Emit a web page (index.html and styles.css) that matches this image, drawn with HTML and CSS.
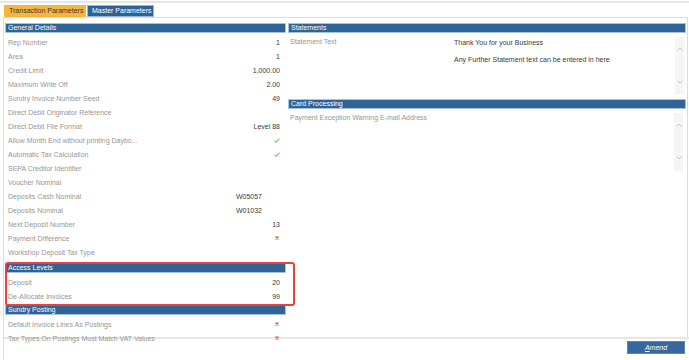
FILE: index.html
```html
<!DOCTYPE html>
<html>
<head>
<meta charset="utf-8">
<link rel="stylesheet" href="styles.css">
</head>
<body>
<div class="page">
  <div class="topline"></div>
  <div class="tabs">
    <div class="tab tab-active">Transaction Parameters</div>
    <div class="tab tab-master">Master Parameters</div>
  </div>
  <div class="panel">
    <div class="col-left">
      <div class="hdr">General Details</div>
      <div class="rows">
        <div class="row"><span class="lbl">Rep Number</span><span class="val">1</span></div>
        <div class="row"><span class="lbl">Area</span><span class="val">1</span></div>
        <div class="row"><span class="lbl">Credit Limit</span><span class="val">1,000.00</span></div>
        <div class="row"><span class="lbl">Maximum Write Off</span><span class="val">2.00</span></div>
        <div class="row"><span class="lbl">Sundry Invoice Number Seed</span><span class="val">49</span></div>
        <div class="row"><span class="lbl">Direct Debit Originator Reference</span><span class="val"></span></div>
        <div class="row"><span class="lbl">Direct Debit File Format</span><span class="val">Level 88</span></div>
        <div class="row"><span class="lbl">Allow Month End without printing Daybo...</span><span class="val"><svg class="tick" width="6" height="5" viewBox="0 0 6 5"><polyline points="0.5,2.8 2,4.2 5.5,0.6" fill="none" stroke="#62d26a" stroke-width="1.1"/></svg></span></div>
        <div class="row"><span class="lbl">Automatic Tax Calculation</span><span class="val"><svg class="tick" width="6" height="5" viewBox="0 0 6 5"><polyline points="0.5,2.8 2,4.2 5.5,0.6" fill="none" stroke="#62d26a" stroke-width="1.1"/></svg></span></div>
        <div class="row"><span class="lbl">SEPA Creditor Identifier</span><span class="val"></span></div>
        <div class="row"><span class="lbl">Voucher Nominal</span><span class="val"></span></div>
        <div class="row"><span class="lbl">Deposits Cash Nominal</span><span class="val val-code">W05057</span></div>
        <div class="row"><span class="lbl">Deposits Nominal</span><span class="val val-code">W01032</span></div>
        <div class="row"><span class="lbl">Next Deposit Number</span><span class="val">13</span></div>
        <div class="row"><span class="lbl">Payment Difference</span><span class="val"><svg class="cross" width="4" height="4" viewBox="0 0 4 4"><path d="M0.5 0.5L3.5 3.5M3.5 0.5L0.5 3.5" stroke="#e2552f" stroke-width="1.2"/></svg></span></div>
        <div class="row"><span class="lbl">Workshop Deposit Tax Type</span><span class="val"></span></div>
      </div>
      <div class="hdr hdr-gap">Access Levels</div>
      <div class="rows">
        <div class="row"><span class="lbl">Deposit</span><span class="val">20</span></div>
        <div class="row"><span class="lbl">De-Allocate Invoices</span><span class="val">99</span></div>
      </div>
      <div class="hdr hdr-gap-s">Sundry Posting</div>
      <div class="rows">
        <div class="row"><span class="lbl">Default Invoice Lines As Postings</span><span class="val"><svg class="cross" width="4" height="4" viewBox="0 0 4 4"><path d="M0.5 0.5L3.5 3.5M3.5 0.5L0.5 3.5" stroke="#e2552f" stroke-width="1.2"/></svg></span></div>
        <div class="row"><span class="lbl">Tax Types On Postings Must Match VAT Values</span><span class="val"><svg class="cross" width="4" height="4" viewBox="0 0 4 4"><path d="M0.5 0.5L3.5 3.5M3.5 0.5L0.5 3.5" stroke="#e2552f" stroke-width="1.2"/></svg></span></div>
      </div>
    </div>
    <div class="col-right">
      <div class="hdr">Statements</div>
      <div class="block block-statement">
        <div class="rlbl">Statement Text</div>
        <div class="textarea">
          <p class="tline">Thank You for your Business</p>
          <p class="tline">Any Further Statement text can be entered in here</p>
        </div>
        <div class="scroll scroll-a">
          <svg width="6" height="4" viewBox="0 0 6 4"><polyline points="0.5,3.5 3,1 5.5,3.5" fill="none" stroke="#c4c4c4" stroke-width="1"/></svg>
          <svg width="6" height="4" viewBox="0 0 6 4"><polyline points="0.5,0.5 3,3 5.5,0.5" fill="none" stroke="#c4c4c4" stroke-width="1"/></svg>
        </div>
      </div>
      <div class="hdr hdr-card">Card Processing</div>
      <div class="block block-card">
        <div class="rlbl rlbl-wide">Payment Exception Warning E-mail Address</div>
        <div class="scroll scroll-b">
          <svg width="6" height="4" viewBox="0 0 6 4"><polyline points="0.5,3.5 3,1 5.5,3.5" fill="none" stroke="#c4c4c4" stroke-width="1"/></svg>
          <svg width="6" height="4" viewBox="0 0 6 4"><polyline points="0.5,0.5 3,3 5.5,0.5" fill="none" stroke="#c4c4c4" stroke-width="1"/></svg>
        </div>
      </div>
    </div>
  </div>
  <div class="footer">
    <button class="btn"><u>A</u>mend</button>
  </div>
  <div class="highlight"></div>
</div>
</body>
</html>
```

FILE: styles.css
```css
* { box-sizing: border-box; }
html, body { margin: 0; padding: 0; background: #ffffff; }
body {
  font-family: "Liberation Sans", Arial, sans-serif;
  font-size: 7px;
  color: #3a3a3a;
}
.page {
  position: relative;
  width: 689px;
  height: 360px;
  overflow: hidden;
}
.topline {
  margin-top: 1px;
  height: 2px;
  background: #e6e6e6;
}
.tabs {
  display: flex;
  margin-top: 2px;
  padding-left: 4px;
  height: 12px;
}
.tab {
  height: 12px;
  line-height: 12px;
  padding: 0 5px;
  white-space: nowrap;
}
.tab-active {
  width: 82px;
  background: #f6b63d;
  color: #3a3630;
}
.tab-master {
  width: 67px;
  margin-left: 1px;
  padding-left: 4px;
  background: #2f6199;
  color: #ffffff;
  border: 1px solid #9bb6d6;
  line-height: 10px;
}
.panel {
  display: flex;
  margin-left: 3px;
  width: 685px;
  height: 320px;
  border-top: 1px solid #dcdcdc;
  border-left: 1px solid #dcdcdc;
  border-right: 1px solid #dcdcdc;
  padding: 5px 1px 0 1px;
  gap: 2px;
}
.col-left {
  width: 281px;
  flex: none;
}
.col-right {
  width: 398px;
  flex: none;
}
.hdr {
  height: 10px;
  line-height: 8px;
  background: #2f6496;
  border: 1px solid #a9c1dc;
  color: #ffffff;
  padding-left: 2px;
  white-space: nowrap;
}
.hdr-gap { margin-top: 4px; }
.hdr-gap-s { margin-top: 2px; }
.rows { padding-top: 2px; }
.row {
  display: flex;
  justify-content: space-between;
  align-items: center;
  height: 14px;
  padding: 0 6px 0 3px;
  white-space: nowrap;
}
.lbl { color: #969696; }
.val { color: #3a3a3a; display: flex; align-items: center; }
.val-code { margin-right: 18px; }
.tick { display: block; }
.cross { display: block; margin-right: 1px; }

.block {
  display: flex;
  margin-top: 2px;
}
.block-statement { height: 62px; }
.block-card { height: 62px; }
.rlbl {
  width: 166px;
  flex: none;
  height: 14px;
  line-height: 14px;
  padding-left: 2px;
  color: #969696;
  white-space: nowrap;
}
.rlbl-wide { width: 386px; }
.textarea {
  flex: 1;
  padding-top: 1px;
}
.tline {
  margin: 0 0 3px 0;
  height: 14px;
  line-height: 14px;
  color: #3a3a3a;
  white-space: nowrap;
}
.hdr-card { margin-top: 2px; }
.scroll {
  width: 9px;
  flex: none;
  background: #f5f5f5;
  display: flex;
  flex-direction: column;
  justify-content: space-between;
  align-items: center;
}
.scroll-a {
  margin: 2px 2px 2px 0;
  height: 58px;
  padding: 10px 0 11px 0;
}
.scroll-b {
  margin: 2px 2px 2px 0;
  height: 58px;
  padding: 10px 0 11px 0;
}
.footer {
  display: flex;
  justify-content: flex-end;
  margin-left: 3px;
  width: 686px;
  height: 23px;
  border-top: 2px solid #e6e6e6;
  border-left: 1px solid #dcdcdc;
  padding: 2px 4px 0 0;
}
.btn {
  width: 58px;
  height: 13px;
  padding: 0;
  border: 1px solid #5a86b8;
  background: #3668a0;
  color: #ffffff;
  font-family: "Liberation Sans", Arial, sans-serif;
  font-size: 7px;
  font-style: italic;
  line-height: 11px;
}
.highlight {
  position: absolute;
  left: 5px;
  top: 262px;
  width: 290px;
  height: 44px;
  border: 2px solid #e8413e;
  border-radius: 3px;
}
```
